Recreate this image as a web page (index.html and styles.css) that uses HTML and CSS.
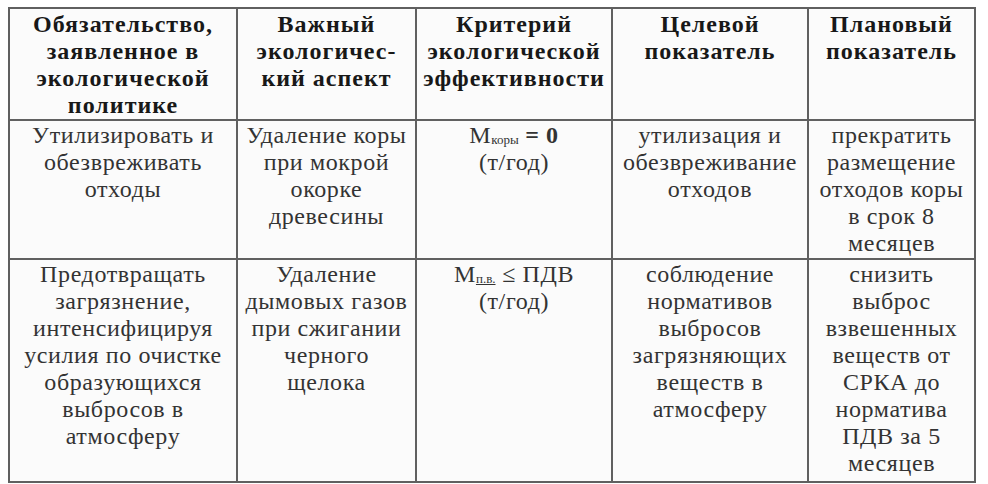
FILE: index.html
```html
<!DOCTYPE html>
<html lang="ru">
<head>
<meta charset="utf-8">
<link rel="stylesheet" href="styles.css">
</head>
<body>
<table class="tbl">
  <colgroup>
    <col class="c1"><col class="c2"><col class="c3"><col class="c4"><col class="c5">
  </colgroup>
  <tr class="head">
    <th>Обязательство,<br>заявленное в<br>экологической<br>политике</th>
    <th>Важный<br>экологичес-<br>кий аспект</th>
    <th>Критерий<br>экологической<br>эффективности</th>
    <th>Целевой<br>показатель</th>
    <th>Плановый<br>показатель</th>
  </tr>
  <tr class="r1">
    <td>Утилизировать и<br>обезвреживать<br>отходы</td>
    <td>Удаление коры<br>при мокрой<br>окорке<br>древесины</td>
    <td>М<sub class="sub">коры</sub> <b>= 0</b><br>(т/год)</td>
    <td>утилизация и<br>обезвреживание<br>отходов</td>
    <td>прекратить<br>размещение<br>отходов коры<br>в срок 8<br>месяцев</td>
  </tr>
  <tr class="r2">
    <td>Предотвращать<br>загрязнение,<br>интенсифицируя<br>усилия по очистке<br>образующихся<br>выбросов в<br>атмосферу</td>
    <td>Удаление<br>дымовых газов<br>при сжигании<br>черного<br>щелока</td>
    <td>М<sub class="sub u">п.в.</sub> ≤ ПДВ<br>(т/год)</td>
    <td>соблюдение<br>нормативов<br>выбросов<br>загрязняющих<br>веществ в<br>атмосферу</td>
    <td>снизить<br>выброс<br>взвешенных<br>веществ от<br>СРКА до<br>норматива<br>ПДВ за 5<br>месяцев</td>
  </tr>
</table>
</body>
</html>
```
FILE: styles.css
```css
html, body {
  margin: 0;
  background: #ffffff;
}
body {
  padding: 7px 0 0 8px;
  font-family: "Liberation Serif", "Times New Roman", serif;
  color: #2a2a2a;
}
.tbl {
  border-collapse: collapse;
  table-layout: fixed;
  width: 966px;
  background: #fbfbfb;
  border: 2px solid #707070;
}
.c1 { width: 228px; }
.c2 { width: 179px; }
.c3 { width: 196px; }
.c4 { width: 196px; }
.c5 { width: 167px; }
.tbl th, .tbl td {
  border: 2px solid #606060;
  vertical-align: top;
  text-align: center;
  padding: 1px 2px 0;
  font-size: 24px;
  line-height: 27px;
  white-space: nowrap;
}
.tbl th {
  font-weight: bold;
  color: #181818;
  letter-spacing: 1px;
  padding-top: 2px;
}
.tbl td {
  font-weight: normal;
  color: #333333;
  letter-spacing: 0.6px;
}
.head { height: 111px; }
.r1 { height: 139px; }
.r1 td { padding-top: 1px; }
.r2 { height: 223px; }
.r2 td { padding-top: 1px; }
.sub {
  font-size: 13px;
  line-height: 0;
  letter-spacing: 0;
  vertical-align: baseline;
  position: relative;
  top: 1px;
}
.u { text-decoration: underline; }
.tbl td b { font-weight: bold; }
```
